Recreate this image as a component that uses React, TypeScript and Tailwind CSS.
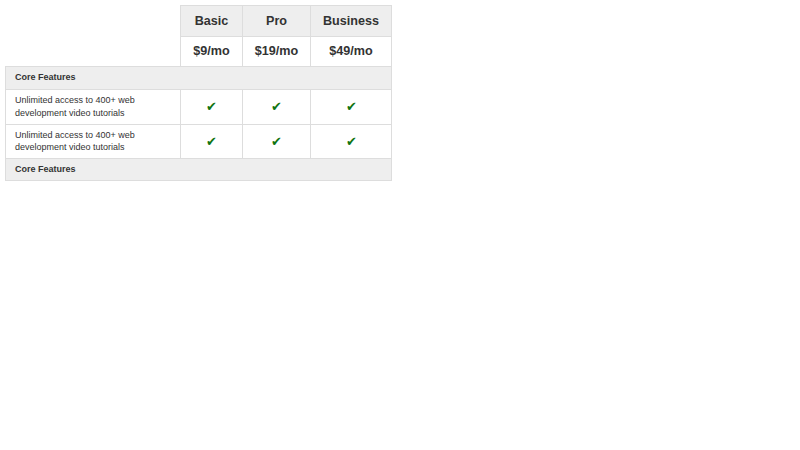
const plans = [
  { name: "Basic", price: "$9/mo" },
  { name: "Pro", price: "$19/mo" },
  { name: "Business", price: "$49/mo" },
]

const features = [
  "Unlimited access to 400+ web development video tutorials",
  "Unlimited access to 400+ web development video tutorials",
]

const cell = "border border-[#dddddd]"

export default function App() {
  return (
    <div className="min-h-[450px] w-[800px] bg-white p-[5px] font-['Liberation_Sans',Arial,sans-serif] text-[#333333]">
      <table className="w-[387px] table-fixed border-collapse">
        <colgroup>
          <col className="w-[175px]" />
          <col className="w-[62px]" />
          <col className="w-[68px]" />
          <col className="w-[81px]" />
        </colgroup>
        <thead>
          <tr className="h-[31px]">
            <th className="border-0"></th>
            {plans.map((p) => (
              <th key={p.name} className={`${cell} bg-[#eeeeee] text-center text-[12.6px] font-bold`}>
                {p.name}
              </th>
            ))}
          </tr>
          <tr className="h-[30px]">
            <th className="border-0"></th>
            {plans.map((p) => (
              <th key={p.price} className={`${cell} bg-white text-center text-[12.6px] font-bold`}>
                {p.price}
              </th>
            ))}
          </tr>
        </thead>
        <tbody>
          <tr className="h-[23px]">
            <td colSpan={4} className={`${cell} bg-[#eeeeee] px-[9px] text-[9px] font-bold`}>
              Core Features
            </td>
          </tr>
          {features.map((f, i) => (
            <tr key={i} className="h-[34.5px]">
              <td className={`${cell} px-[9px] py-[4px] text-[9px] leading-[12.5px]`}>{f}</td>
              {plans.map((p) => (
                <td key={p.name} className={`${cell} text-center text-[13px] text-[#0f7410]`}>
                  ✔
                </td>
              ))}
            </tr>
          ))}
          <tr className="h-[22px]">
            <td colSpan={4} className={`${cell} bg-[#eeeeee] px-[9px] text-[9px] font-bold`}>
              Core Features
            </td>
          </tr>
        </tbody>
      </table>
    </div>
  )
}
